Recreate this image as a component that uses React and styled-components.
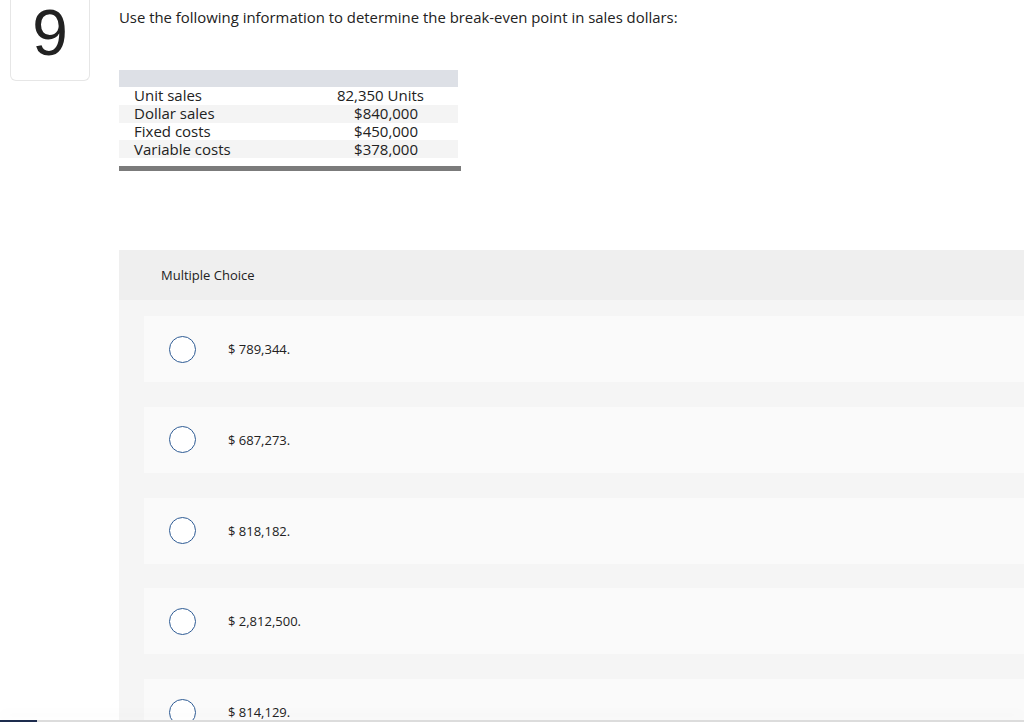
import styled, { createGlobalStyle } from 'styled-components';

const GlobalStyle = createGlobalStyle`
	body {
		margin: 0;
		background: #ffffff;
		font-family: 'Open Sans', 'Liberation Sans', sans-serif;
		color: #222;
		overflow: hidden;
	}
`;

const rows = [
	{ label: 'Unit sales', value: '82,350 Units', pad: 34 },
	{ label: 'Dollar sales', value: '$840,000', pad: 40 },
	{ label: 'Fixed costs', value: '$450,000', pad: 40 },
	{ label: 'Variable costs', value: '$378,000', pad: 40 },
];

const choices = ['$ 789,344.', '$ 687,273.', '$ 818,182.', '$ 2,812,500.', '$ 814,129.'];

function App() {
	return (
		<>
			<GlobalStyle />
			<Page>
				<Gutter>
					<NumberBox>
						<Digit>9</Digit>
					</NumberBox>
				</Gutter>
				<Main>
					<Question>
						Use the following information to determine the break-even point in sales
						dollars:
					</Question>
					<Table>
						<HeadBar />
						{rows.map((r, i) => (
							<Row key={r.label} striped={i % 2 === 1}>
								<Label>{r.label}</Label>
								<Value style={{ paddingRight: r.pad }}>{r.value}</Value>
							</Row>
						))}
						<FootBar />
					</Table>
					<Panel>
						<PanelHead>Multiple Choice</PanelHead>
						<Choices>
							{choices.map((c) => (
								<Choice key={c}>
									<Radio />
									<ChoiceText>{c}</ChoiceText>
								</Choice>
							))}
						</Choices>
					</Panel>
				</Main>
			</Page>
			<BottomBar>
				<Progress />
			</BottomBar>
		</>
	);
}

export default App;

// ########## styled components ##########
const Page = styled.div`
	display: flex;
	height: 722px;
`;

const Gutter = styled.div`
	width: 119px;
	flex-shrink: 0;
	padding-left: 10px;
	box-sizing: border-box;
`;

const NumberBox = styled.div`
	width: 80px;
	height: 81px;
	box-sizing: border-box;
	border: 1px solid #e6e6e6;
	border-top: none;
	border-radius: 0 0 6px 6px;
	display: flex;
	justify-content: center;
	overflow: hidden;
`;

const Digit = styled.div`
	font-family: 'Liberation Sans', 'Open Sans', sans-serif;
	font-size: 64px;
	line-height: 66px;
	height: 66px;
	color: #222;
`;

const Main = styled.div`
	flex: 1;
	display: flex;
	flex-direction: column;
	min-width: 0;
`;

const Question = styled.div`
	font-size: 14.9px;
	line-height: 20px;
	padding-top: 7px;
	color: #222;
`;

const Table = styled.div`
	width: 342px;
	margin-top: 43px;
	display: flex;
	flex-direction: column;
`;

const HeadBar = styled.div`
	width: 339px;
	height: 17px;
	background: #dde0e6;
`;

const Row = styled.div`
	width: 339px;
	height: 17.75px;
	display: flex;
	align-items: center;
	justify-content: space-between;
	background: ${(p) => (p.striped ? '#f4f4f4' : '#ffffff')};
	font-size: 15px;
	color: #222;
`;

const Label = styled.div`
	padding-left: 15px;
	line-height: 17px;
	height: 17px;
`;

const Value = styled.div`
	text-align: right;
	line-height: 17px;
	height: 17px;
`;

const FootBar = styled.div`
	height: 5px;
	margin-top: 8px;
	background: #7b7b7b;
	width: 342px;
`;

const Panel = styled.div`
	margin-top: 79px;
	background: #f5f5f5;
	flex: 1;
	display: flex;
	flex-direction: column;
`;

const PanelHead = styled.div`
	height: 50px;
	background: #efefef;
	display: flex;
	align-items: center;
	padding-left: 42px;
	font-size: 13px;
	color: #222;
`;

const Choices = styled.div`
	display: flex;
	flex-direction: column;
	gap: 24.75px;
	padding: 16px 0 0 25px;
`;

const Choice = styled.div`
	height: 66px;
	flex-shrink: 0;
	background: #fafafa;
	display: flex;
	align-items: center;
	padding-left: 25px;
`;

const Radio = styled.span`
	width: 25px;
	height: 25px;
	border-radius: 50%;
	border: 1.5px solid #2e5b94;
	background: #ffffff;
	flex-shrink: 0;
`;

const ChoiceText = styled.span`
	margin-left: 32px;
	font-size: 13px;
	color: #222;
`;

const BottomBar = styled.div`
	position: fixed;
	left: 0;
	right: 0;
	bottom: 0;
	height: 2px;
	background: #dcdcdc;
	box-shadow: 0 -6px 12px rgba(0, 0, 0, 0.06);
`;

const Progress = styled.div`
	width: 37px;
	height: 100%;
	background: #1d2c4d;
`;
